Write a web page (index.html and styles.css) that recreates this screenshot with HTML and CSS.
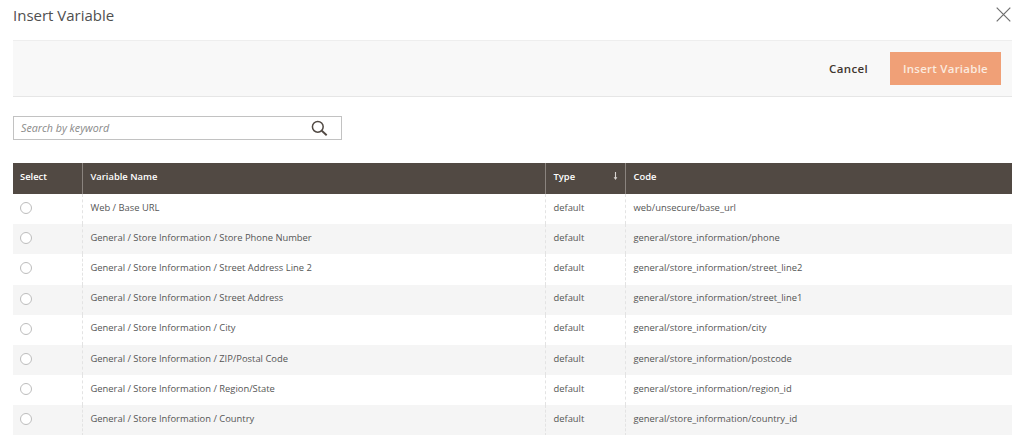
FILE: index.html
```html
<!DOCTYPE html>
<html lang="en">
<head>
<meta charset="utf-8">
<title>Insert Variable</title>
<link rel="stylesheet" href="styles.css">
</head>
<body>
<div class="modal">
  <header class="head">
    <h1 class="title">Insert Variable</h1>
    <button class="close" aria-label="Close">
      <svg width="15" height="15" viewBox="0 0 15 15"><path d="M.7.7l13.6 13.6M14.3.7L.7 14.3" fill="none" stroke="#6e6e6e" stroke-width="1.2"/></svg>
    </button>
  </header>
  <div class="actions">
    <button class="cancel">Cancel</button>
    <button class="primary">Insert Variable</button>
  </div>
  <div class="search">
    <span class="placeholder">Search by keyword</span>
    <svg class="lens" width="17" height="17" viewBox="0 0 18 18"><circle cx="7.2" cy="7.2" r="5.7" fill="none" stroke="#514943" stroke-width="1.6"/><path d="M11.4 11.4l5.2 4.8" fill="none" stroke="#514943" stroke-width="2"/></svg>
  </div>
  <table class="grid">
    <colgroup><col class="c1"><col class="c2"><col class="c3"><col class="c4"></colgroup>
    <thead>
      <tr><th>Select</th><th>Variable Name</th><th class="sorted">Type<svg class="arrow" width="5" height="8" viewBox="0 0 5 8"><path d="M2.5 0v6" stroke="#d8d4d1" stroke-width="1.1" fill="none"/><path d="M.6 5.2h3.8L2.5 8z" fill="#d8d4d1"/></svg></th><th>Code</th></tr>
    </thead>
    <tbody>
      <tr><td><span class="radio"></span></td><td>Web / Base URL</td><td>default</td><td>web/unsecure/base_url</td></tr>
      <tr><td><span class="radio"></span></td><td>General / Store Information / Store Phone Number</td><td>default</td><td>general/store_information/phone</td></tr>
      <tr><td><span class="radio"></span></td><td>General / Store Information / Street Address Line 2</td><td>default</td><td>general/store_information/street_line2</td></tr>
      <tr><td><span class="radio"></span></td><td>General / Store Information / Street Address</td><td>default</td><td>general/store_information/street_line1</td></tr>
      <tr><td><span class="radio"></span></td><td>General / Store Information / City</td><td>default</td><td>general/store_information/city</td></tr>
      <tr><td><span class="radio"></span></td><td>General / Store Information / ZIP/Postal Code</td><td>default</td><td>general/store_information/postcode</td></tr>
      <tr><td><span class="radio"></span></td><td>General / Store Information / Region/State</td><td>default</td><td>general/store_information/region_id</td></tr>
      <tr><td><span class="radio"></span></td><td>General / Store Information / Country</td><td>default</td><td>general/store_information/country_id</td></tr>
    </tbody>
  </table>
</div>
</body>
</html>
```
FILE: styles.css
```css
* { box-sizing: border-box; }
html, body { margin: 0; height: 435px; overflow: hidden; background: #fff; }
body { font-family: "Open Sans", sans-serif; color: #514943; }
.modal { padding: 0 12px 0 13px; }
.head { display: flex; justify-content: space-between; align-items: flex-start; height: 40px; }
.title { margin: 5px 0 0; font-size: 15px; line-height: 21px; font-weight: 400; color: #4f4f4f; }
.close { border: 0; background: none; padding: 0; margin: 7px 1px 0 0; height: 15px; width: 15px; display: block; }
.actions { display: flex; justify-content: flex-end; align-items: center; gap: 22px; height: 57px; padding-right: 11px; background: #f8f8f8; border-top: 1px solid #eeeeee; border-bottom: 1px solid #e6e6e6; }
button { font-family: inherit; }
.cancel { border: 0; background: none; padding: 0; font-size: 11.5px; font-weight: 600; color: #41362f; letter-spacing: .35px; }
.primary { border: 0; width: 111px; height: 33px; background: #f0a077; color: #fbeadf; font-size: 11.5px; font-weight: 600; letter-spacing: .25px; padding: 0; }
.search { display: flex; align-items: center; justify-content: space-between; width: 329px; height: 24px; margin-top: 19px; padding: 0 13px 0 7px; border: 1px solid #c2c2c2; }
.placeholder { font-size: 10.7px; font-style: italic; color: #8a8a8a; margin-top: -1px; }
.lens { display: block; }
.grid { width: 999px; margin-top: 23px; border-collapse: collapse; table-layout: fixed; font-size: 9.4px; }
.c1 { width: 69px; } .c2 { width: 463px; } .c3 { width: 80px; }
.grid th { height: 31px; padding: 0 7px 4px 8px; background: #514943; color: #fff; font-weight: 600; text-align: left; border-left: 1px solid #8a837e; position: relative; }
.grid td { height: 30.2px; padding: 0 7px 4px 8px; color: #565656; border-left: 1px dashed #e3e3e3; }
.grid th:first-child, .grid td:first-child { border-left: 0; padding-left: 7px; }
.grid tbody tr:nth-child(even) td { background: #f5f5f5; }
.arrow { position: absolute; right: 7px; top: 9px; }
.radio { display: block; width: 12px; height: 12px; border: 1px solid #bdbdbd; border-radius: 50%; background: #fff; margin-top: 2px; }
```
